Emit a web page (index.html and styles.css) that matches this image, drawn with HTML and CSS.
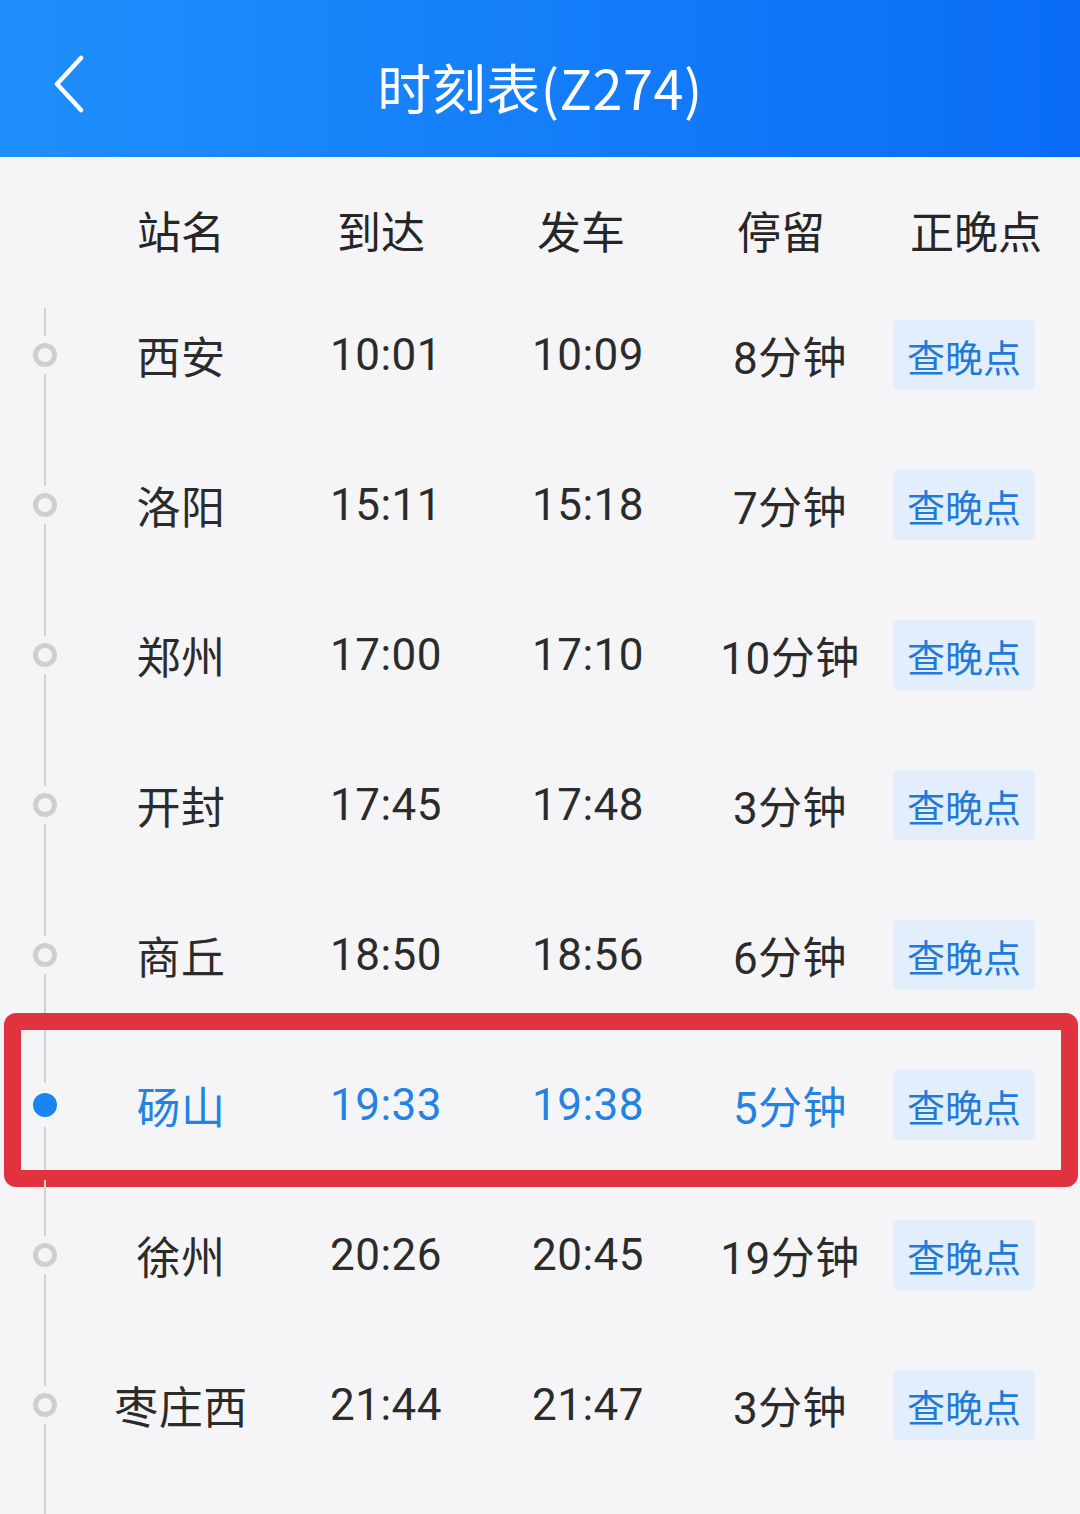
FILE: index.html
```html
<!DOCTYPE html>
<html lang="zh-CN">
<head>
    <meta charset="UTF-8">
    <meta name="viewport" content="width=device-width, initial-scale=1.0">
    <title>时刻表(Z274)</title>
    <link rel="stylesheet" href="styles.css">
</head>
<body>
    <div class="topbar">
        <a class="back" href="javascript:void(0);">
            <svg width="40" height="60" viewBox="0 0 40 60">
                <polyline points="30,5 6,31 30,57" fill="none" stroke="#fff" stroke-width="4.5" stroke-linecap="round" stroke-linejoin="round"/>
            </svg>
        </a>
        <h1>时刻表(Z274)</h1>
    </div>

    <div class="table-head">
        <div></div>
        <div>站名</div>
        <div>到达</div>
        <div>发车</div>
        <div>停留</div>
        <div>正晚点</div>
    </div>

    <div class="list">
        <div class="row first">
            <div class="track"><span class="seg"></span><span class="dot"></span><span class="seg"></span></div>
            <div class="cell">西安</div>
            <div class="cell">10:01</div>
            <div class="cell">10:09</div>
            <div class="cell stay">8分钟</div>
            <div class="cell"><button class="late">查晚点</button></div>
        </div>
        <div class="row">
            <div class="track"><span class="seg"></span><span class="dot"></span><span class="seg"></span></div>
            <div class="cell">洛阳</div>
            <div class="cell">15:11</div>
            <div class="cell">15:18</div>
            <div class="cell stay">7分钟</div>
            <div class="cell"><button class="late">查晚点</button></div>
        </div>
        <div class="row">
            <div class="track"><span class="seg"></span><span class="dot"></span><span class="seg"></span></div>
            <div class="cell">郑州</div>
            <div class="cell">17:00</div>
            <div class="cell">17:10</div>
            <div class="cell stay">10分钟</div>
            <div class="cell"><button class="late">查晚点</button></div>
        </div>
        <div class="row">
            <div class="track"><span class="seg"></span><span class="dot"></span><span class="seg"></span></div>
            <div class="cell">开封</div>
            <div class="cell">17:45</div>
            <div class="cell">17:48</div>
            <div class="cell stay">3分钟</div>
            <div class="cell"><button class="late">查晚点</button></div>
        </div>
        <div class="row">
            <div class="track"><span class="seg"></span><span class="dot"></span><span class="seg"></span></div>
            <div class="cell">商丘</div>
            <div class="cell">18:50</div>
            <div class="cell">18:56</div>
            <div class="cell stay">6分钟</div>
            <div class="cell"><button class="late">查晚点</button></div>
        </div>
        <div class="row current">
            <div class="track"><span class="seg"></span><span class="dot"></span><span class="seg"></span></div>
            <div class="cell">砀山</div>
            <div class="cell">19:33</div>
            <div class="cell">19:38</div>
            <div class="cell stay">5分钟</div>
            <div class="cell"><button class="late">查晚点</button></div>
            <div class="mark"></div>
        </div>
        <div class="row">
            <div class="track"><span class="seg"></span><span class="dot"></span><span class="seg"></span></div>
            <div class="cell">徐州</div>
            <div class="cell">20:26</div>
            <div class="cell">20:45</div>
            <div class="cell stay">19分钟</div>
            <div class="cell"><button class="late">查晚点</button></div>
        </div>
        <div class="row">
            <div class="track"><span class="seg"></span><span class="dot"></span><span class="seg"></span></div>
            <div class="cell">枣庄西</div>
            <div class="cell">21:44</div>
            <div class="cell">21:47</div>
            <div class="cell stay">3分钟</div>
            <div class="cell"><button class="late">查晚点</button></div>
        </div>
        <div class="tail"><span class="seg"></span></div>
    </div>
</body>
</html>
```

FILE: styles.css
```css
body {
    margin: 0;
    font-family: Roboto, "Noto Sans CJK SC", sans-serif;
    background: #f5f5f7;
    color: #2b2b2b;
    overflow: hidden;
}
.topbar {
    height: 157px;
    background: linear-gradient(to right, #1f8ffb, #0a6cf6);
    display: flex;
    align-items: center;
    justify-content: center;
    position: relative;
}
.back {
    position: absolute;
    left: 51px;
    top: 53px;
    display: block;
    width: 40px;
    height: 60px;
}
.topbar h1 {
    margin: 16px 0 0;
    font-family: "Noto Sans CJK SC", sans-serif;
    font-weight: 400;
    font-size: 54px;
    color: #fff;
    letter-spacing: 0.5px;
}
.table-head {
    height: 123px;
    box-sizing: border-box;
    padding-top: 32px;
    display: grid;
    grid-template-columns: 90px 182px 218px 182px 218px 172px;
    align-items: center;
    font-size: 44px;
    color: #262626;
}
.table-head div {
    text-align: center;
    height: 91px;
    line-height: 91px;
}
.list {
    position: relative;
}
.row {
    height: 150px;
    display: grid;
    grid-template-columns: 90px 182px 228px 176px 214px 1fr;
    align-items: center;
    position: relative;
}
.cell {
    text-align: center;
    font-size: 44px;
    letter-spacing: 0.5px;
}
.cell.stay {
    padding-left: 14px;
}
.track {
    height: 150px;
    display: flex;
    flex-direction: column;
    align-items: center;
}
.seg {
    width: 2px;
    height: 56px;
    background: #d2d2d2;
}
.row.first .seg:first-child {
    height: 28px;
    margin-top: 28px;
}
.dot {
    width: 24px;
    height: 24px;
    box-sizing: border-box;
    border: 5px solid #cfcfcf;
    border-radius: 50%;
    margin: 7px 0;
}
.late {
    display: block;
    margin-left: 3px;
    width: 142px;
    height: 70px;
    padding: 0;
    border: none;
    border-radius: 5px;
    background: #e2eefb;
    color: #1f7ad8;
    font-family: "Noto Sans CJK SC", sans-serif;
    font-size: 38px;
}
.row.current .cell {
    color: #2382e2;
}
.row.current .seg {
    height: 53px;
}
.row.current .dot {
    border: none;
    background: #1a84f0;
    margin: 10px 0;
}
.mark {
    position: absolute;
    left: 4px;
    top: -17px;
    width: 1074px;
    height: 174px;
    box-sizing: border-box;
    border: 17px solid #e1323f;
    border-radius: 12px;
}
.tail {
    height: 40px;
    width: 90px;
    display: flex;
    justify-content: center;
}
.tail .seg {
    height: 40px;
}
```
